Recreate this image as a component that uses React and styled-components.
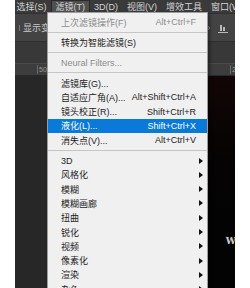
import React from "react";
import styled, { createGlobalStyle } from "styled-components";

const GlobalStyle = createGlobalStyle`
  html, body {
    margin: 0;
    padding: 0;
    background: #ffffff;
  }
  body {
    width: 250px;
    height: 288px;
    overflow: hidden;
    font-family: "Liberation Sans", "Noto Sans CJK SC", sans-serif;
  }
`;

const menuBarItems = ["选择(S)", "滤镜(T)", "3D(D)", "视图(V)", "增效工具", "窗口(W)", "帮"];

const menuGroups = [
  [{ label: "上次滤镜操作(F)", shortcut: "Alt+Ctrl+F", disabled: true }],
  [{ label: "转换为智能滤镜(S)" }],
  [{ label: "Neural Filters...", disabled: true }],
  [
    { label: "滤镜库(G)..." },
    { label: "自适应广角(A)...", shortcut: "Alt+Shift+Ctrl+A" },
    { label: "镜头校正(R)...", shortcut: "Shift+Ctrl+R" },
    { label: "液化(L)...", shortcut: "Shift+Ctrl+X", active: true },
    { label: "消失点(V)...", shortcut: "Alt+Ctrl+V" },
  ],
  [
    { label: "3D", sub: true },
    { label: "风格化", sub: true },
    { label: "模糊", sub: true },
    { label: "模糊画廊", sub: true },
    { label: "扭曲", sub: true },
    { label: "锐化", sub: true },
    { label: "视频", sub: true },
    { label: "像素化", sub: true },
    { label: "渲染", sub: true },
    { label: "杂色", sub: true },
  ],
];

const App = () => {
  return (
    <>
      <GlobalStyle />
      <Page>
        <Window>
          <MenuBar>
            {menuBarItems.map((item) => (
              <MenuBarItem key={item} $open={item === "滤镜(T)"}>
                {item}
              </MenuBarItem>
            ))}
          </MenuBar>
          <OptionsBar>
            <CheckBox />
            <OptionText>显示变换控件</OptionText>
            <Spacer />
            <OptionIcon width="8" height="8" viewBox="0 0 8 8">
              <path d="M0 4h7M5 2l2 2-2 2" stroke="#8a8a8a" strokeWidth="1" fill="none" />
            </OptionIcon>
            <OptionIcon width="10" height="10" viewBox="0 0 10 10">
              <rect x="2" y="2" width="2" height="6" fill="#b8b8b8" />
              <rect x="5" y="4" width="2" height="4" fill="#b8b8b8" />
              <rect x="0" y="9" width="10" height="1" fill="#b8b8b8" />
            </OptionIcon>
          </OptionsBar>
          <TabStrip />
          <Ruler>
            <RulerMark $left={22}>50</RulerMark>
            <RulerMark $left={215}>2</RulerMark>
          </Ruler>
          <Workspace>
            <Canvas>
              <CanvasText>WI</CanvasText>
            </Canvas>
          </Workspace>

          <Dropdown>
            {menuGroups.map((group, gi) => (
              <React.Fragment key={gi}>
                {gi > 0 && <Separator />}
                {group.map((item) => (
                  <MenuRow key={item.label} $active={item.active} $disabled={item.disabled}>
                    <RowLabel>{item.label}</RowLabel>
                    {item.shortcut && <Shortcut>{item.shortcut}</Shortcut>}
                    {item.sub && <SubArrow />}
                  </MenuRow>
                ))}
              </React.Fragment>
            ))}
          </Dropdown>
        </Window>
      </Page>
    </>
  );
};
export default App;

const Page = styled.div`
  width: 250px;
  height: 288px;
  display: flex;
  background: #ffffff;
`;

const Window = styled.div`
  position: relative;
  margin-left: 15px;
  width: 220px;
  flex: 0 0 220px;
  height: 288px;
  display: flex;
  flex-direction: column;
  background: #272727;
  overflow: hidden;
`;

const MenuBar = styled.div`
  height: 13px;
  display: flex;
  align-items: stretch;
  background: #3a3a3a;
  margin-left: -3px;
  overflow: hidden;
`;

const MenuBarItem = styled.div`
  display: flex;
  align-items: center;
  padding: 0 4.5px;
  font-size: 9px;
  color: #d4d4d4;
  white-space: nowrap;
  background: ${(p) => (p.$open ? "#4f4f4f" : "transparent")};
  box-shadow: ${(p) => (p.$open ? "inset 0 0 0 1px #2a2a2a" : "none")};
`;

const OptionsBar = styled.div`
  height: 27px;
  display: flex;
  align-items: center;
  background: #434343;
  border-top: 1px solid #303030;
  padding: 0 7px 0 2px;
  gap: 3px;
`;

const CheckBox = styled.div`
  width: 2px;
  height: 6px;
  border-right: 1px solid #777;
`;

const OptionText = styled.span`
  font-size: 9px;
  color: #c8c8c8;
  white-space: nowrap;
`;

const Spacer = styled.div`
  flex: 1;
`;

const OptionIcon = styled.svg`
  display: block;
  margin-left: 4px;
`;

const TabStrip = styled.div`
  height: 21px;
  background: #383838;
  border-top: 1px solid #2e2e2e;
`;

const Ruler = styled.div`
  position: relative;
  height: 11px;
  background: #3d3d3d;
  border-top: 1px solid #4a4a4a;
  border-bottom: 1px solid #2a2a2a;
`;

const RulerMark = styled.span`
  position: absolute;
  left: ${(p) => p.$left}px;
  top: 1px;
  font-size: 7px;
  color: #9a9a9a;
  border-left: 1px solid #6a6a6a;
  padding-left: 1px;
  line-height: 9px;
`;

const Workspace = styled.div`
  flex: 1;
  display: flex;
  padding-left: 90px;
  background: #272727;
`;

const Canvas = styled.div`
  flex: 1;
  position: relative;
  background: linear-gradient(180deg, #120606 0%, #050303 40%, #030303 100%);
`;

const CanvasText = styled.span`
  position: absolute;
  right: -6px;
  top: 160px;
  font-family: "DejaVu Serif", "Liberation Serif", serif;
  font-weight: 700;
  font-size: 9px;
  color: #cfcfcf;
  letter-spacing: 0.5px;
`;

const Dropdown = styled.div`
  position: absolute;
  left: 32px;
  top: 12px;
  width: 161px;
  padding-top: 2px;
  padding-bottom: 4px;
  background: #f0f0f0;
  border: 1px solid #9d9d9d;
  box-sizing: border-box;
  box-shadow: 2px 2px 3px rgba(0, 0, 0, 0.4);
`;

const MenuRow = styled.div`
  height: 14.3px;
  display: flex;
  align-items: center;
  padding: 0 11px 0 13px;
  font-size: 9px;
  white-space: nowrap;
  background: ${(p) => (p.$active ? "#0a7ad8" : "transparent")};
  color: ${(p) => (p.$active ? "#ffffff" : p.$disabled ? "#8c8c8c" : "#1c1c1c")};
`;

const RowLabel = styled.span`
  flex: 1;
`;

const Shortcut = styled.span`
  font-size: 9px;
`;

const SubArrow = styled.span`
  width: 0;
  height: 0;
  margin-right: -7px;
  border-top: 3.5px solid transparent;
  border-bottom: 3.5px solid transparent;
  border-left: 4px solid #111111;
`;

const Separator = styled.div`
  height: 1px;
  margin: 2.5px 0;
  background: #c6c6c6;
`;
